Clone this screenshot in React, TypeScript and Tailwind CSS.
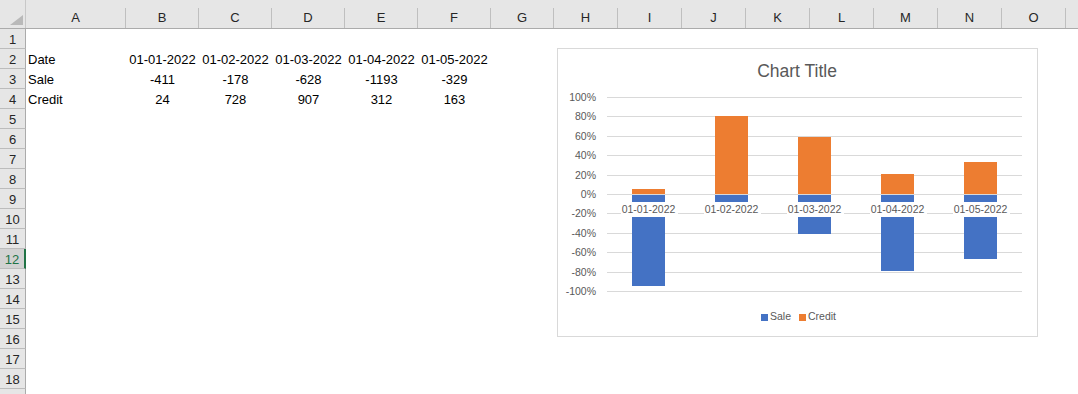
import React from "react";

const COLS: { l: string; cls: string }[] = [
  { l: "A", cls: "w-[100px]" },
  { l: "B", cls: "w-[73px]" },
  { l: "C", cls: "w-[73px]" },
  { l: "D", cls: "w-[73px]" },
  { l: "E", cls: "w-[73px]" },
  { l: "F", cls: "w-[73px]" },
  { l: "G", cls: "w-[63px]" },
  { l: "H", cls: "w-[64px]" },
  { l: "I", cls: "w-[64px]" },
  { l: "J", cls: "w-[64px]" },
  { l: "K", cls: "w-[64px]" },
  { l: "L", cls: "w-[64px]" },
  { l: "M", cls: "w-[64px]" },
  { l: "N", cls: "w-[64px]" },
  { l: "O", cls: "w-[64px]" },
  { l: "", cls: "w-[64px]" },
];

const DATES = ["01-01-2022", "01-02-2022", "01-03-2022", "01-04-2022", "01-05-2022"];
const SALE = [-411, -178, -628, -1193, -329];
const CREDIT = [24, 728, 907, 312, 163];

const DATA: Record<number, string[]> = {
  2: ["Date", ...DATES],
  3: ["Sale", ...SALE.map(String)],
  4: ["Credit", ...CREDIT.map(String)],
};

function Chart() {
  const zero = 145;
  const step = 19.4;
  const left = 49;
  const right = 464;
  const catW = (right - left) / 5;
  const barW = 33;
  const ticks = [100, 80, 60, 40, 20, 0, -20, -40, -60, -80, -100];
  const yOf = (p: number) => zero - (p / 20) * step;
  return (
    <div className="absolute left-[557px] top-[48px] w-[481px] h-[289px] bg-white border border-[#d9d9d9]">
      <svg width="479" height="287" className="block font-['Liberation_Sans',sans-serif]">
        <text x="239" y="28" textAnchor="middle" fontSize="17.5" fill="#595959">
          Chart Title
        </text>
        {ticks.map((t) => {
          const y = Math.round(yOf(t)) + 0.5;
          return (
            <g key={t}>
              <line x1={left} x2={right} y1={y} y2={y} stroke="#d9d9d9" strokeWidth="1" />
              <text x="38" y={y + 3.5} textAnchor="end" fontSize="10.5" fill="#595959">
                {t}%
              </text>
            </g>
          );
        })}
        {DATES.map((d, i) => {
          const tot = Math.abs(SALE[i]) + Math.abs(CREDIT[i]);
          const sp = (SALE[i] / tot) * 100;
          const cp = (CREDIT[i] / tot) * 100;
          const cx = left + catW * (i + 0.5);
          const x = Math.round(cx - barW / 2);
          const yTop = Math.round(yOf(cp));
          const yBot = Math.round(yOf(sp));
          return (
            <g key={d}>
              <rect x={x} y={yTop} width={barW} height={zero - yTop} fill="#ED7D31" />
              <rect x={x} y={zero + 1} width={barW} height={yBot - zero - 1} fill="#4472C4" />
            </g>
          );
        })}
        {DATES.map((d, i) => {
          const cx = left + catW * (i + 0.5);
          return (
            <g key={"l" + d}>
              <rect x={Math.round(cx - 28)} y="153" width="57" height="15" fill="#ffffff" />
              <text x={cx} y="163.8" textAnchor="middle" fontSize="10.5" fill="#595959">
                {d}
              </text>
            </g>
          );
        })}
        <rect x="203" y="265" width="7" height="7" fill="#4472C4" />
        <text x="212" y="271" fontSize="10.5" fill="#595959">
          Sale
        </text>
        <rect x="241" y="265" width="7" height="7" fill="#ED7D31" />
        <text x="250" y="271" fontSize="10.5" fill="#595959">
          Credit
        </text>
      </svg>
    </div>
  );
}

export default function App() {
  const rows = Array.from({ length: 19 }, (_, i) => i + 1);
  return (
    <div className="relative w-[1078px] h-[394px] overflow-hidden bg-white font-['Liberation_Sans',sans-serif] text-[13px]">
      {/* column header */}
      <div className="flex h-[29px] bg-[#e6e6e6] border-b border-[#ababab]">
        <div className="w-[26px] shrink-0 h-full flex items-end justify-end border-r border-[#c8c8c8] pr-[2px] pb-[3px]">
          <div className="w-0 h-0 border-l-[13px] border-l-transparent border-b-[10px] border-b-[#b9b9b9]" />
        </div>
        {COLS.map((c, i) => (
          <div key={i} className={`${c.cls} shrink-0 h-full flex items-end`}>
            <div className="w-full h-[20px] border-r border-[#bfbfbf] flex items-center justify-center leading-[20px] text-[#262626]">
              {c.l}
            </div>
          </div>
        ))}
      </div>
      {/* rows */}
      {rows.map((r) => {
        const sel = r === 12;
        const data = DATA[r];
        return (
          <div key={r} className="flex h-[20px]">
            <div
              className={
                sel
                  ? "w-[26px] shrink-0 h-[20px] bg-[#d2d2d2] border-r-2 border-r-[#217346] border-b border-b-[#bcbcbc] text-center leading-[22px] text-[#217346] overflow-hidden"
                  : "w-[26px] shrink-0 h-[20px] bg-[#e6e6e6] border-r border-r-[#ababab] border-b border-b-[#bcbcbc] text-center leading-[22px] text-[#262626] overflow-hidden"
              }
            >
              {r <= 18 ? r : ""}
            </div>
            {COLS.map((c, ci) => {
              const v = data ? data[ci] : undefined;
              return (
                <div
                  key={ci}
                  className={`${c.cls} shrink-0 h-[20px] leading-[22px] text-black whitespace-nowrap ${
                    ci === 0 ? "pl-[2px] text-left" : "text-center"
                  }`}
                >
                  {v ?? ""}
                </div>
              );
            })}
          </div>
        );
      })}
      <Chart />
    </div>
  );
}
